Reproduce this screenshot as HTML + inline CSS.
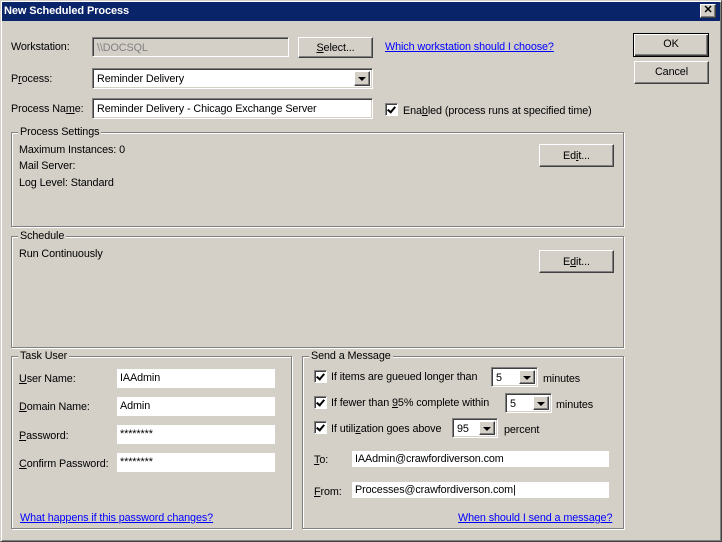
<!DOCTYPE html>
<html><head><meta charset="utf-8"><style>
*{box-sizing:border-box;margin:0;padding:0}
body{width:722px;height:542px;background:#d4d0c8;font-family:"Liberation Sans",sans-serif;font-size:10.8px;letter-spacing:-0.1px;color:#000;position:relative;overflow:hidden}
.a{position:absolute;white-space:nowrap}
.win{position:absolute;left:0;top:0;width:722px;height:542px;border:1px solid;border-color:#d4d0c8 #404040 #404040 #d4d0c8;box-shadow:inset 1px 1px 0 #fff,inset -1px -1px 0 #808080}
.title{position:absolute;left:2px;top:2px;width:718px;height:19px;background:#0a246a;color:#fff;font-weight:bold;font-size:11px;line-height:19px;padding-left:2px}
.close{position:absolute;left:700px;top:4px;width:16px;height:14px;background:#d4d0c8;border:1px solid;border-color:#fff #404040 #404040 #fff;box-shadow:inset -1px -1px 0 #808080;font-size:11px;line-height:11px;text-align:center;font-weight:bold;color:#000}
.tb{position:absolute;background:#fff;border:1px solid;border-color:#808080 #fff #fff #808080;box-shadow:inset 1px 1px 0 #404040,inset -1px -1px 0 #d4d0c8;padding:3px 0 0 4px;line-height:14px}
.flat{position:absolute;background:#fff;line-height:17px;padding-left:3px;padding-top:1px}
.btn{position:absolute;border:1px solid;border-color:#fff #404040 #404040 #fff;box-shadow:inset -1px -1px 0 #808080;text-align:center;line-height:20px}
.dd{position:absolute;top:2px;right:2px;width:16px;bottom:2px;background:#d4d0c8;border:1px solid;border-color:#fff #404040 #404040 #fff;box-shadow:inset -1px -1px 0 #808080}
.dd:after{content:"";position:absolute;left:3px;top:5px;border-left:4px solid transparent;border-right:4px solid transparent;border-top:4px solid #000}
.grp{position:absolute;border:1px solid #808080;box-shadow:1px 1px 0 #fff,inset 1px 1px 0 #fff}
.grp span{position:absolute;left:6px;top:-8px;background:#d4d0c8;padding:0 2px;line-height:14px}
.cb{position:absolute;width:13px;height:13px;background:#fff;border:1px solid;border-color:#808080 #fff #fff #808080;box-shadow:inset 1px 1px 0 #404040}
.cb:after{content:"";position:absolute;left:3px;top:1px;width:3px;height:6px;border:solid #000;border-width:0 2px 2px 0;transform:rotate(40deg)}
a{color:#0000ff;text-decoration:underline}
u{text-decoration:underline}
</style></head><body>
<div class="win"></div>
<div class="title">New Scheduled Process</div>
<div class="close">✕</div>

<div class="a" style="left:11px;top:41px">Workstation:</div>
<div class="tb" style="left:92px;top:37px;width:197px;height:20px;background:#d4d0c8;color:#808080">\\DOCSQL</div>
<div class="btn" style="left:298px;top:37px;width:75px;height:21px"><u>S</u>elect...</div>
<div class="a" style="left:385px;top:41px"><a>Which workstation should I choose?</a></div>
<div class="btn" style="left:633px;top:33px;width:76px;height:24px;border:1px solid #000;box-shadow:inset 1px 1px 0 #fff,inset -1px -1px 0 #404040,inset -2px -2px 0 #808080;line-height:21px">OK</div>
<div class="btn" style="left:634px;top:61px;width:75px;height:23px;line-height:21px">Cancel</div>

<div class="a" style="left:11px;top:73px">P<u>r</u>ocess:</div>
<div class="tb" style="left:92px;top:68px;width:281px;height:21px">Reminder Delivery<div class="dd"></div></div>
<div class="a" style="left:11px;top:103px">Process Na<u>m</u>e:</div>
<div class="tb" style="left:92px;top:98px;width:281px;height:21px">Reminder Delivery - Chicago Exchange Server</div>
<div class="cb" style="left:385px;top:103px"></div>
<div class="a" style="left:403px;top:105px">Ena<u>b</u>led (process runs at specified time)</div>

<div class="grp" style="left:11px;top:132px;width:613px;height:95px"><span>Process Settings</span></div>
<div class="a" style="left:19px;top:144px">Maximum Instances: 0</div>
<div class="a" style="left:19px;top:160px">Mail Server:</div>
<div class="a" style="left:19px;top:177px">Log Level: Standard</div>
<div class="btn" style="left:539px;top:144px;width:75px;height:23px;line-height:22px">Ed<u>i</u>t...</div>

<div class="grp" style="left:11px;top:236px;width:613px;height:112px"><span>Schedule</span></div>
<div class="a" style="left:19px;top:248px">Run Continuously</div>
<div class="btn" style="left:539px;top:250px;width:75px;height:23px;line-height:22px">E<u>d</u>it...</div>

<div class="grp" style="left:11px;top:356px;width:281px;height:173px"><span>Task User</span></div>
<div class="a" style="left:19px;top:373px"><u>U</u>ser Name:</div>
<div class="flat" style="left:117px;top:369px;width:158px;height:19px">IAAdmin</div>
<div class="a" style="left:19px;top:401px"><u>D</u>omain Name:</div>
<div class="flat" style="left:117px;top:397px;width:158px;height:19px">Admin</div>
<div class="a" style="left:19px;top:430px"><u>P</u>assword:</div>
<div class="flat" style="left:117px;top:425px;width:158px;height:19px">********</div>
<div class="a" style="left:19px;top:458px"><u>C</u>onfirm Password:</div>
<div class="flat" style="left:117px;top:453px;width:158px;height:19px">********</div>
<div class="a" style="left:20px;top:512px"><a>What happens if this password changes?</a></div>

<div class="grp" style="left:302px;top:356px;width:322px;height:173px"><span>Send a Message</span></div>
<div class="cb" style="left:314px;top:370px"></div>
<div class="a" style="left:331px;top:371px">If items are gueued longer than</div>
<div class="tb" style="left:491px;top:367px;width:47px;height:20px">5<div class="dd"></div></div>
<div class="a" style="left:543px;top:373px">minutes</div>
<div class="cb" style="left:314px;top:396px"></div>
<div class="a" style="left:331px;top:397px">If fewer than <u>9</u>5% complete within</div>
<div class="tb" style="left:505px;top:393px;width:47px;height:20px">5<div class="dd"></div></div>
<div class="a" style="left:556px;top:399px">minutes</div>
<div class="cb" style="left:314px;top:421px"></div>
<div class="a" style="left:331px;top:423px">If utili<u>z</u>ation goes above</div>
<div class="tb" style="left:452px;top:418px;width:46px;height:20px">95<div class="dd"></div></div>
<div class="a" style="left:504px;top:424px">percent</div>
<div class="a" style="left:314px;top:454px"><u>T</u>o:</div>
<div class="flat" style="left:352px;top:451px;width:257px;height:16px;line-height:15px;padding-top:1px">IAAdmin@crawfordiverson.com</div>
<div class="a" style="left:314px;top:486px"><u>F</u>rom:</div>
<div class="flat" style="left:352px;top:482px;width:257px;height:16px;line-height:15px;padding-top:1px">Processes@crawfordiverson.com|</div>
<div class="a" style="left:458px;top:512px"><a>When should I send a message?</a></div>
</body></html>
